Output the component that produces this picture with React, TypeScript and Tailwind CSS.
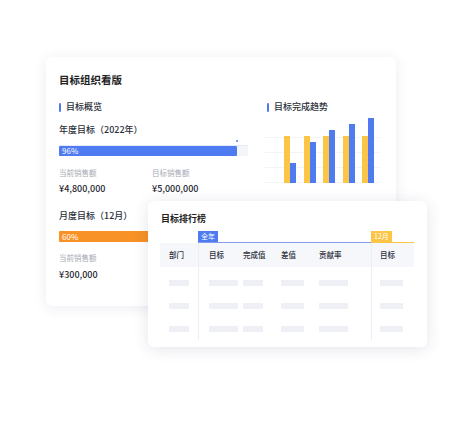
import React from "react";

const font = "font-['Noto_Sans_CJK_SC','Noto_Sans',sans-serif]";

function SectionTitle({ text }: { text: string }) {
  return (
    <div className="flex items-center h-[18px] gap-[5px]">
      <span className="block w-[2px] h-[9px] bg-[#4e7cf0] rounded-[1px]" />
      <span className="text-[9px] leading-[18px] font-medium text-[#2b2f3a]">{text}</span>
    </div>
  );
}

const trend = [
  { target: 47, done: 20 },
  { target: 47, done: 41 },
  { target: 47, done: 53 },
  { target: 47, done: 59 },
  { target: 47, done: 65 },
];

const skeleton = [
  [20, 29, 20, 23, 29, 23],
  [20, 29, 20, 23, 29, 23],
  [20, 29, 20, 23, 29, 23],
];

export default function App() {
  return (
    <div className={`relative w-[474px] h-[426px] bg-white ${font}`}>
      <div className="pt-[57px] pl-[46px]">
        {/* Board card */}
        <div className="w-[350px] h-[249px] bg-white rounded-[6px] shadow-[0_2px_14px_rgba(30,40,90,0.09)] pt-[14px] pl-[13px] flex">
          <div className="w-[206px]">
            <div className="text-[10.5px] leading-[18px] font-semibold text-[#222]">目标组织看版</div>
            <div className="mt-[9px]">
              <SectionTitle text="目标概览" />
            </div>
            <div className="mt-[6px] text-[9px] leading-[16px] font-medium text-[#2b2f3a]">年度目标（2022年）</div>
            <div className="relative h-[7px] w-[189px]">
              <span className="absolute left-[177px] top-[2px] w-[2px] h-[2px] rounded-full bg-[#4e7cf0]" />
            </div>
            <div className="w-[189px] h-[11px] bg-[#f4f5f8] border-t border-[#e6ebfb]">
              <div className="w-[178px] h-full bg-[#4e7cf0] rounded-[1px] flex items-center pl-[3px]">
                <span className="text-[8px] leading-none text-white">96%</span>
              </div>
            </div>
            <div className="mt-[11px] flex">
              <div className="w-[93px]">
                <div className="text-[7.5px] leading-[12px] text-[#a7abb5]">当前销售额</div>
                <div className="mt-[2px] text-[9px] leading-[15px] font-medium text-[#23262f]">¥4,800,000</div>
              </div>
              <div>
                <div className="text-[7.5px] leading-[12px] text-[#a7abb5]">目标销售额</div>
                <div className="mt-[2px] text-[9px] leading-[15px] font-medium text-[#23262f]">¥5,000,000</div>
              </div>
            </div>
            <div className="mt-[12px] text-[9px] leading-[16px] font-medium text-[#2b2f3a]">月度目标（12月）</div>
            <div className="mt-[7px] w-[189px] h-[11px] bg-[#f4f5f8]">
              <div className="w-[113px] h-full bg-[#f89227] rounded-[1px] flex items-center pl-[3px]">
                <span className="text-[8px] leading-none text-white">60%</span>
              </div>
            </div>
            <div className="mt-[10px] text-[7.5px] leading-[12px] text-[#a7abb5]">当前销售额</div>
            <div className="mt-[3px] text-[9px] leading-[15px] font-medium text-[#23262f]">¥300,000</div>
          </div>

          <div className="pt-[27px] pl-[2px]">
            <SectionTitle text="目标完成趋势" />
            <div className="relative mt-[2px] ml-[-2px] w-[115px] h-[65px]">
              <div className="absolute left-0 right-0 top-[19px] h-px bg-[#f3f4f7]" />
              <div className="absolute left-0 right-0 top-[34px] h-px bg-[#f3f4f7]" />
              <div className="absolute left-0 right-0 top-[49px] h-px bg-[#f3f4f7]" />
              <div className="absolute left-0 right-0 top-[64px] h-px bg-[#f3f4f7]" />
              <div className="relative flex items-end h-full pl-[19px] gap-[7.5px]">
                {trend.map((g, i) => (
                  <div key={i} className="flex items-end">
                    <div className="w-[6px] bg-[#fcc546]" style={{ height: g.target }} />
                    <div className="w-[6px] bg-[#4e7cf0]" style={{ height: g.done }} />
                  </div>
                ))}
              </div>
            </div>
          </div>
        </div>
      </div>

      {/* Ranking card, overlapping the board */}
      <div className="absolute left-[148px] top-[201px] w-[279px] h-[146px] bg-white rounded-[6px] shadow-[0_2px_16px_rgba(30,40,90,0.12)] pt-[10px] pl-[12px]">
        <div className="text-[9px] leading-[16px] font-semibold text-[#222] pl-[1px]">目标排行榜</div>
        <div className="mt-[4px] w-[254px]">
          <div className="flex h-[12px]">
            <div className="w-[38px]" />
            <div className="w-[173px] flex border-b border-[#7f9cf2]">
              <span className="flex items-center h-[11px] px-[3px] bg-[#4e7cf0] text-[7px] leading-none text-white">全年</span>
            </div>
            <div className="w-[43px] flex border-b border-[#fcc546]">
              <span className="flex items-center h-[11px] px-[3px] bg-[#fcc546] text-[7px] leading-none text-white">12月</span>
            </div>
          </div>
          <div className="flex">
            <div className="w-[38px]">
              <div className="h-[24px] bg-[#f6f7fb] flex items-center pl-[9px] text-[7.5px] font-medium text-[#2b2f3a]">部门</div>
              <div className="pt-[4px]">
                {skeleton.map((r, i) => (
                  <div key={i} className="h-[23px] flex items-center pl-[9px]">
                    <div className="h-[6px] bg-[#eef0f6]" style={{ width: r[0] }} />
                  </div>
                ))}
              </div>
            </div>
            <div className="w-[173px] border-l border-[#eceef4]">
              <div className="h-[24px] bg-[#f6f7fb] flex items-center text-[7.5px] font-medium text-[#2b2f3a]">
                <span className="w-[44px] pl-[10px]">目标</span>
                <span className="w-[38px]">完成值</span>
                <span className="w-[38px]">差值</span>
                <span>贡献率</span>
              </div>
              <div className="pt-[4px]">
                {skeleton.map((r, i) => (
                  <div key={i} className="h-[23px] flex items-center">
                    <div className="w-[44px] pl-[10px]">
                      <div className="h-[6px] bg-[#eef0f6]" style={{ width: r[1] }} />
                    </div>
                    <div className="w-[38px]">
                      <div className="h-[6px] bg-[#eef0f6]" style={{ width: r[2] }} />
                    </div>
                    <div className="w-[38px]">
                      <div className="h-[6px] bg-[#eef0f6]" style={{ width: r[3] }} />
                    </div>
                    <div>
                      <div className="h-[6px] bg-[#eef0f6]" style={{ width: r[4] }} />
                    </div>
                  </div>
                ))}
              </div>
            </div>
            <div className="w-[43px] border-l border-[#eceef4]">
              <div className="h-[24px] bg-[#f6f7fb] flex items-center pl-[8px] text-[7.5px] font-medium text-[#2b2f3a]">目标</div>
              <div className="pt-[4px]">
                {skeleton.map((r, i) => (
                  <div key={i} className="h-[23px] flex items-center pl-[8px]">
                    <div className="h-[6px] bg-[#eef0f6]" style={{ width: r[5] }} />
                  </div>
                ))}
              </div>
            </div>
          </div>
        </div>
      </div>
    </div>
  );
}
